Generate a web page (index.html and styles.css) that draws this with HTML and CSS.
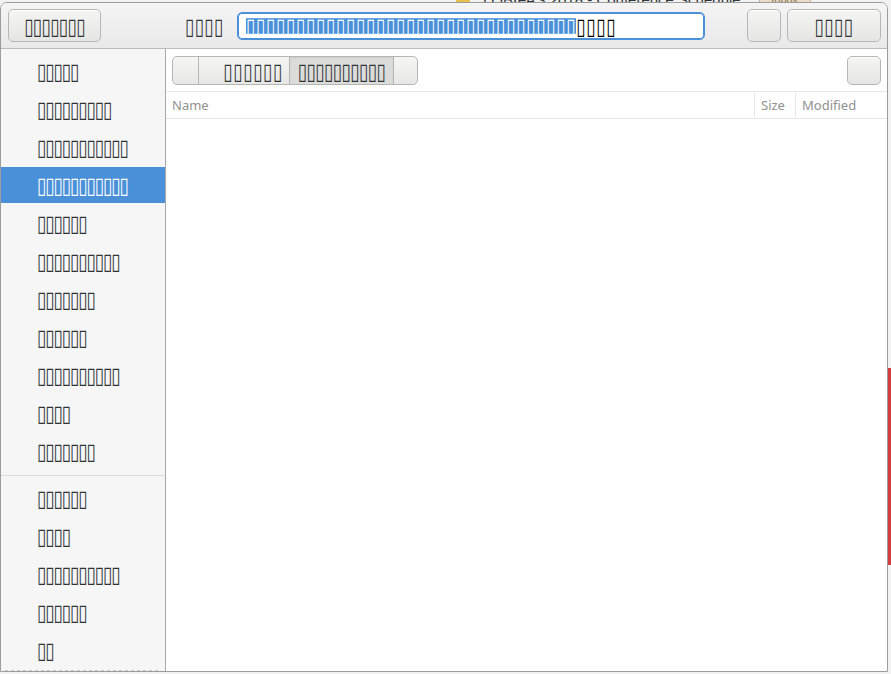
FILE: index.html
```html
<!DOCTYPE html>
<html lang="en">
<head>
    <meta charset="UTF-8">
    <title>Save File</title>
    <link rel="stylesheet" href="styles.css">
</head>
<body>
    <div class="desk-mail">
        <span class="desk-star"></span>
        <span class="desk-subject">LOBIFAS 2018 - Conference Schedule</span>
        <span class="desk-inbox">Inbox</span>
    </div>
    <div class="desk-red"></div>

    <div class="dialog">
        <header class="headerbar">
            <button class="btn btn-cancel"><span class="t">▯▯▯▯▯▯▯</span></button>
            <span class="title"><span class="t">▯▯▯▯</span></span>
            <div class="entry"><span class="t"><span class="sel">▯▯▯▯▯▯▯▯▯▯▯▯▯▯▯▯▯▯▯▯▯▯▯▯▯▯▯▯▯▯▯▯▯</span>▯▯▯▯</span></div>
            <button class="btn btn-icon"></button>
            <button class="btn btn-ok"><span class="t">▯▯▯▯</span></button>
        </header>

        <div class="main">
            <nav class="sidebar">
                <div class="place"><span class="t">▯▯▯▯▯</span></div>
                <div class="place"><span class="t">▯▯▯▯▯▯▯▯▯</span></div>
                <div class="place"><span class="t">▯▯▯▯▯▯▯▯▯▯▯</span></div>
                <div class="place selected"><span class="t">▯▯▯▯▯▯▯▯▯▯▯</span></div>
                <div class="place"><span class="t">▯▯▯▯▯▯</span></div>
                <div class="place"><span class="t">▯▯▯▯▯▯▯▯▯▯</span></div>
                <div class="place"><span class="t">▯▯▯▯▯▯▯</span></div>
                <div class="place"><span class="t">▯▯▯▯▯▯</span></div>
                <div class="place"><span class="t">▯▯▯▯▯▯▯▯▯▯</span></div>
                <div class="place"><span class="t">▯▯▯▯</span></div>
                <div class="place"><span class="t">▯▯▯▯▯▯▯</span></div>
                <div class="sep"></div>
                <div class="place"><span class="t">▯▯▯▯▯▯</span></div>
                <div class="place"><span class="t">▯▯▯▯</span></div>
                <div class="place"><span class="t">▯▯▯▯▯▯▯▯▯▯</span></div>
                <div class="place"><span class="t">▯▯▯▯▯▯</span></div>
                <div class="place"><span class="t">▯▯</span></div>
            </nav>

            <section class="files">
                <div class="toolbar">
                    <div class="pathbar">
                        <button class="seg seg-arrow"></button>
                        <button class="seg seg-dir"><span class="t">▯▯▯▯▯▯</span></button>
                        <button class="seg seg-cur"><span class="t">▯▯▯▯▯▯▯▯▯▯</span></button>
                        <button class="seg seg-arrow"></button>
                    </div>
                    <button class="btn btn-small"></button>
                </div>
                <div class="columns">
                    <span class="col-name">Name</span>
                    <span class="col-size">Size</span>
                    <span class="col-mod">Modified</span>
                </div>
                <div class="list"></div>
            </section>
        </div>
    </div>
</body>
</html>
```

FILE: styles.css
```css
* {
    box-sizing: border-box;
}
body {
    margin: 0;
    width: 891px;
    height: 674px;
    overflow: hidden;
    position: relative;
    background: #f2f2f2;
    font-family: 'DejaVu Sans', sans-serif;
}

/* bits of the window behind the dialog */
.desk-mail {
    position: absolute;
    top: -9px;
    left: 456px;
    display: flex;
    align-items: center;
    font: 15px 'Liberation Sans', sans-serif;
    color: #2e3436;
}
.desk-star {
    width: 14px;
    height: 14px;
    border-radius: 3px;
    background: #e9c04b;
    margin-right: 13px;
}
.desk-inbox {
    margin-left: 18px;
    width: 52px;
    height: 16px;
    background: #eadcc6;
    border: 1px solid #c9b594;
    color: #8b7350;
    font-size: 11px;
    text-align: center;
}
.desk-red {
    position: absolute;
    left: 888px;
    top: 368px;
    width: 3px;
    height: 197px;
    background: #d33d3d;
}

.dialog {
    position: absolute;
    left: 0;
    top: 2px;
    width: 888px;
    height: 670px;
    border: 1px solid #9c9c9c;
    border-radius: 7px 7px 0 0;
    background: #fff;
    display: flex;
    flex-direction: column;
    overflow: hidden;
    color: #2e3436;
    font-size: 17px;
}

/* the missing-glyph boxes are taller than they are wide */
.t {
    display: inline-block;
    line-height: 12px;
    white-space: nowrap;
    transform: scaleY(1.3);
}

.headerbar {
    flex: none;
    height: 46px;
    display: flex;
    align-items: center;
    padding: 0 6px 0 7px;
    background: linear-gradient(#f4f4f4, #e9e9e9);
    border-bottom: 1px solid #bcbcbc;
}
.btn {
    height: 33px;
    padding: 0;
    border: 1px solid #b6b6b3;
    border-radius: 5px;
    background: linear-gradient(#f5f5f4, #e5e5e3);
    box-shadow: inset 0 1px #fff;
    font: inherit;
    color: inherit;
}
.btn-cancel {
    width: 93px;
    letter-spacing: -0.7px;
}
.title {
    margin-left: 84px;
    width: 52px;
    letter-spacing: 0.3px;
}
.entry {
    width: 468px;
    height: 28px;
    padding-left: 8px;
    display: flex;
    align-items: center;
    overflow: hidden;
    color: #000;
    letter-spacing: 0.65px;
    background: #fff;
    border: 1px solid #4a90d9;
    border-radius: 5px;
    box-shadow: inset 0 0 0 1px #4a90d9;
}
.sel {
    display: inline-block;
    background: #4a90d9;
    color: #fff;
}
.btn-icon {
    width: 34px;
    margin-left: 42px;
}
.btn-ok {
    width: 94px;
    margin-left: 6px;
    letter-spacing: 0.4px;
}

.main {
    flex: 1;
    display: flex;
    min-height: 0;
}
.sidebar {
    width: 165px;
    flex: none;
    position: relative;
    display: flex;
    flex-direction: column;
    gap: 2px;
    padding-top: 4px;
    background: #f6f6f6;
    border-right: 1px solid #a7a7a7;
    letter-spacing: -1.1px;
}
.sidebar::after {
    content: '';
    position: absolute;
    left: 4px;
    right: 4px;
    bottom: 0;
    height: 1px;
    background: repeating-linear-gradient(90deg, #c8c8c8 0 3px, transparent 3px 6px);
}
.place {
    flex: none;
    height: 36px;
    display: flex;
    align-items: center;
    padding-left: 36px;
}
.place.selected {
    background: #4a90d9;
    color: #fff;
}
.sep {
    flex: none;
    height: 1px;
    margin: 4px 0 2px;
    background: #dcdcdc;
}

.files {
    flex: 1;
    display: flex;
    flex-direction: column;
    padding-top: 7px;
}
.toolbar {
    display: flex;
    justify-content: space-between;
    padding: 0 6px;
}
.pathbar {
    display: flex;
}
.seg {
    height: 29px;
    margin-left: -1px;
    padding: 0;
    border: 1px solid #b6b6b3;
    background: linear-gradient(#f5f5f4, #e7e7e5);
    font: inherit;
    color: inherit;
}
.seg:first-child {
    margin-left: 0;
    width: 27px;
    border-radius: 5px 0 0 5px;
}
.seg:last-child {
    width: 25px;
    border-radius: 0 5px 5px 0;
}
.seg-dir {
    width: 92px;
    text-align: right;
    padding-right: 6px;
    letter-spacing: 0.6px;
}
.seg-cur {
    width: 105px;
    background: #dcdcdb;
    box-shadow: inset 0 1px 2px rgba(0, 0, 0, 0.08);
    letter-spacing: -0.6px;
}
.btn-small {
    width: 34px;
    height: 29px;
}

.columns {
    margin-top: 6px;
    height: 28px;
    display: flex;
    border-top: 1px solid #e8e8e8;
    border-bottom: 1px solid #e8e8e8;
    font: 13px 'Noto Sans', sans-serif;
    color: #919191;
}
.columns span {
    display: flex;
    align-items: center;
    padding-left: 6px;
}
.col-name {
    flex: 1;
}
.col-size {
    width: 41px;
    border-left: 1px solid #e8e8e8;
}
.col-mod {
    width: 92px;
    border-left: 1px solid #e8e8e8;
}
.list {
    flex: 1;
}
```
